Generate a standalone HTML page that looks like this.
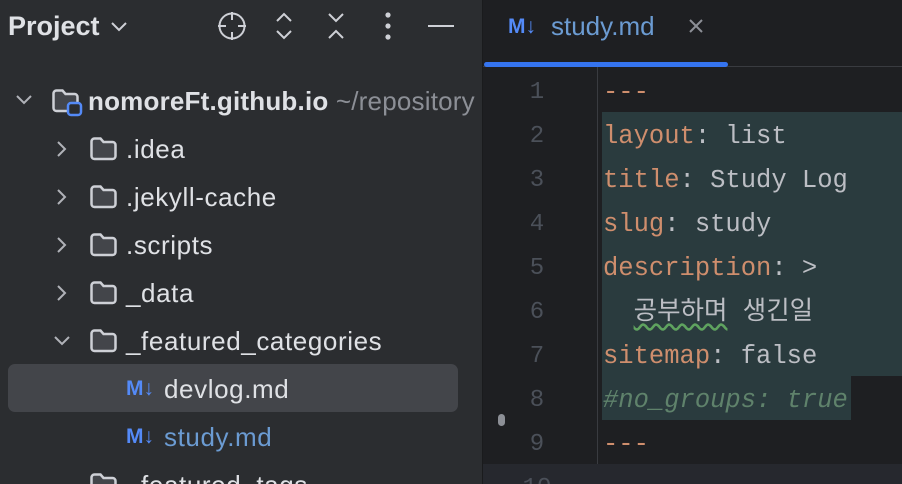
<!DOCTYPE html>
<html style="width:902px;height:484px;overflow:hidden"><head><meta charset="utf-8"><style>
*{margin:0;padding:0;box-sizing:border-box}
body{width:902px;height:484px;overflow:hidden;background:#1e1f22;position:relative;font-family:"Liberation Sans","Noto Sans CJK KR",sans-serif}
.a{position:absolute;white-space:nowrap}
#left{left:0;top:0;width:482px;height:484px;background:#2b2d30;overflow:hidden}
.t{font-size:26px;color:#dfe1e5;line-height:48px;letter-spacing:0.6px}
.md{color:#548af7;font-weight:bold;font-size:21px}
.code{font-family:"Liberation Mono","Noto Sans CJK KR",monospace;font-size:25.5px;color:#bcbec4;line-height:44px}
.k{color:#cf8e6d}
.ln{font-family:"Liberation Mono",monospace;font-size:24px;color:#4b5059;width:40px;text-align:center;line-height:44px;height:413px;overflow:hidden}
</style></head><body>
<div class="a" id="left">
<div class="a" style="left:8px;top:11px;font-size:27px;font-weight:bold;color:#dfe1e5">Project</div>
<svg class="a" style="left:0;top:0" width="482" height="484" fill="none" stroke="#ced0d6" stroke-width="2">
<defs><path id="f" d="M1.5 4.5a3 3 0 0 1 3-3h6l3 3.5h9a3 3 0 0 1 3 3v11a3 3 0 0 1-3 3h-18a3 3 0 0 1-3-3z" fill="#43454a" stroke-width="2.5"/></defs>
<path d="M112 23l7 7 7-7"/>
<circle cx="232" cy="26" r="12.5"/><path d="M232 12v8M232 32v8M218 26h8M238 26h8"/>
<path d="M277 21l7-7 7 7M277 31l7 7 7-7"/>
<path d="M329 14l7 7 7-7M329 38l7-7 7 7"/>
<circle cx="388" cy="15" r="1.6" fill="#ced0d6"/><circle cx="388" cy="26" r="1.6" fill="#ced0d6"/><circle cx="388" cy="37" r="1.6" fill="#ced0d6"/>
<path d="M428 26h26"/>
<path d="M17 96l7 7 7-7" stroke="#b0b2b8"/>
<use href="#f" x="52" y="89"/>
<rect x="68" y="103" width="13" height="12" rx="3" fill="#2b2d30" stroke="#548af7" stroke-width="2.5"/>
<g stroke="#b0b2b8"><path d="M58 142l7 7-7 7M58 190l7 7-7 7M58 238l7 7-7 7M58 286l7 7-7 7M55 337l7 7 7-7"/></g>
<use href="#f" x="90" y="137"/><use href="#f" x="90" y="185"/><use href="#f" x="90" y="233"/><use href="#f" x="90" y="281"/><use href="#f" x="90" y="329"/><use href="#f" x="90" y="473"/>
</svg>
<div class="a t" style="left:88px;top:77px;font-weight:bold;letter-spacing:0.2px">nomoreFt.github.io <span style="font-weight:normal;color:#8c8f96">~/repository</span></div>
<div class="a t" style="left:126px;top:125px">.idea</div>
<div class="a t" style="left:126px;top:173px">.jekyll-cache</div>
<div class="a t" style="left:126px;top:221px">.scripts</div>
<div class="a t" style="left:126px;top:269px">_data</div>
<div class="a t" style="left:126px;top:317px">_featured_categories</div>
<div class="a" style="left:8px;top:364px;width:450px;height:48px;background:#43454a;border-radius:7px"></div>
<div class="a md" style="left:126px;top:377px">M↓</div><div class="a t" style="left:164px;top:365px">devlog.md</div>
<div class="a md" style="left:126px;top:425px">M↓</div><div class="a t" style="left:164px;top:413px;color:#6b9bd2">study.md</div>
<div class="a t" style="left:126px;top:461px;height:23px;overflow:hidden">_featured_tags</div>
</div>
<div class="a" style="left:482px;top:0;width:1px;height:484px;background:#1a1b1d"></div>
<div class="a md" style="left:508px;top:15px">M↓</div>
<div class="a" style="left:551px;top:11px;font-size:26px;color:#6b9bd2">study.md</div>
<svg class="a" style="left:688px;top:18px" width="16" height="16" stroke="#8c8f96" stroke-width="2"><path d="M2 2l12 12M14 2L2 14"/></svg>
<div class="a" style="left:483px;top:66px;width:419px;height:1px;background:#393b40"></div>
<div class="a" style="left:484px;top:62px;width:244px;height:5px;background:#3574f0;border-radius:3px"></div>
<div class="a" style="left:597px;top:67px;width:1px;height:417px;background:#393b40"></div>
<div class="a" style="left:602px;top:112px;width:300px;height:264px;background:#2a3b3e"></div>
<div class="a" style="left:602px;top:376px;width:249px;height:44px;background:#2a3b3e"></div>
<div class="a" style="left:483px;top:464px;width:419px;height:20px;background:#26282e"></div>
<div class="a" style="left:498px;top:414px;width:7px;height:12px;border-radius:4px;background:#8c8f96"></div>
<div class="a ln" style="left:517px;top:71px">1<br>2<br>3<br>4<br>5<br>6<br>7<br>8<br>9<br>10</div>
<div class="a code" style="left:603px;top:71px"><span class="k">---</span><br><span class="k">layout</span>: list<br><span class="k">title</span>: Study Log<br><span class="k">slug</span>: study<br><span class="k">description</span>: &gt;<br>&nbsp;&nbsp;<span style="text-decoration:underline wavy #5fa35f;text-underline-offset:4px">공부하며</span> 생긴일<br><span class="k">sitemap</span>: false<br><span style="color:#5f826b;font-style:italic">#no_groups: true</span><br><span class="k">---</span></div>
</body></html>
